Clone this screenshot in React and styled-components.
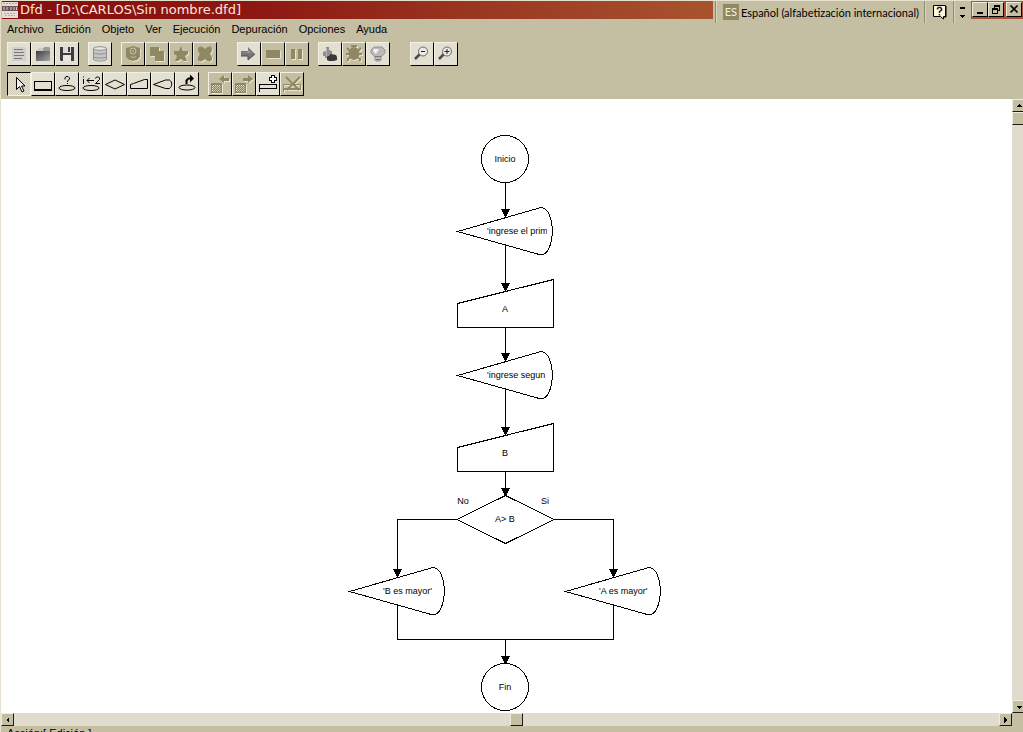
import React from 'react'
import styled, { createGlobalStyle, css } from 'styled-components'

const face = '#c4bea3'
const light = '#e3dfd1'
const shade = '#8f8863'
const track = '#dfdbcd'

const GlobalStyle = createGlobalStyle`
  * {
    box-sizing: border-box;
  }
  body {
    margin: 0;
    overflow: hidden;
    background: ${face};
    font-family: 'Liberation Sans', Arial, sans-serif;
    font-size: 11px;
    color: #000;
  }
  button {
    font: inherit;
    color: inherit;
    padding: 0;
  }
`

// The status bar is partly below the bottom of the screen
const Window = styled.div`
  display: flex;
  flex-direction: column;
  height: calc(100vh + 12px);
  border-left: 1px solid #e6e0cc;
  border-top: 1px solid #e6e0cc;
`

const TitleBar = styled.header`
  display: flex;
  align-items: flex-start;
  height: 19px;
  padding-left: 1px;
  background: ${face};
`

const Caption = styled.div`
  flex: 1;
  display: flex;
  align-items: center;
  gap: 2px;
  height: 18px;
  background: linear-gradient(90deg, #850f0f 0%, #8d1712 35%, #9b3a22 70%, #a8532f 100%);
  white-space: nowrap;
  overflow: hidden;
`

const Title = styled.h1`
  margin: 0;
  color: #ffe6dc;
  font: 13px/18px 'DejaVu Sans', Verdana, sans-serif;
`

const LanguageBar = styled.div`
  display: flex;
  align-items: center;
  height: 22px;
  padding-left: 2px;
  background: ${face};
  white-space: nowrap;
`

const Divider = styled.span`
  width: 2px;
  height: 22px;
  border-left: 1px solid #8f8a72;
  border-right: 1px solid #d9d4c0;
`

const Language = styled.button`
  display: flex;
  align-items: center;
  gap: 2px;
  padding: 0 5px 0 6px;
  border: 0;
  background: none;
  font: 11px Lato, 'Liberation Sans', sans-serif;
`

const LanguageCode = styled.span`
  width: 16px;
  line-height: 16px;
  text-align: center;
  color: #f4f1e0;
  background: ${shade};
`

const BarButton = styled.button`
  display: block;
  padding: 0 6px 0 ${(props) => (props.$narrow ? 5 : 7)}px;
  border: 0;
  background: none;
  line-height: 0;
`

const WindowButtons = styled.div`
  display: flex;
  height: 18px;
  padding: 1px;
  background: #a8532f;
`

const WindowButton = styled.button`
  width: 16px;
  height: 15px;
  margin-left: ${(props) => (props.$apart ? '2px' : '0')};
  border: 1px solid;
  border-color: #f0ecdc #000 #000 #f0ecdc;
  background: ${face};
  line-height: 0;
`

const MenuBar = styled.nav`
  display: flex;
  gap: 11px;
  padding: 2px 6px 6px;
`

const MenuItem = styled.button`
  border: 0;
  background: none;
  line-height: 14px;
`

const Toolbar = styled.div`
  display: flex;
  padding: 0 6px;
  margin-bottom: ${(props) => props.$bottom}px;
`

const ToolGroup = styled.div`
  display: flex;
  margin-right: ${(props) => props.$gap}px;
`

const ToolButton = styled.button`
  width: 24px;
  height: 24px;
  border: 1px solid;
  border-color: #f3f0e4 #000 #000 #f3f0e4;
  background: ${(props) => (props.disabled ? face : light)};
  color: #000;
  line-height: 0;

  ${(props) =>
    props.disabled &&
    css`
      color: ${shade};
      svg {
        filter: drop-shadow(1px 1px 0 #e9e5d3);
      }
    `}

  ${(props) =>
    props.$pressed &&
    css`
      border-color: #000 #f3f0e4 #f3f0e4 #000;
      background: repeating-conic-gradient(#cfcab6 0 25%, #e6e2d4 0 50%) 0 0 / 2px 2px;
    `}
`

const Workspace = styled.main`
  flex: 1;
  min-height: 0;
  display: grid;
  grid-template-columns: 1fr 11px;
  grid-template-rows: 1fr 13px;
`

const Canvas = styled.section`
  display: flex;
  justify-content: center;
  align-items: flex-start;
  padding-top: 36px;
  background: #fff;
  overflow: hidden;

  svg {
    flex: none;
  }
`

const Label = styled.text`
  font: 9px 'Liberation Sans', Arial, sans-serif;
  fill: #000;
  text-anchor: ${(props) => props.$anchor || 'middle'};
`

const ScrollBar = styled.div`
  display: flex;
  flex-direction: ${(props) => (props.$vertical ? 'column' : 'row')};
  background: ${track};
  overflow: hidden;
`

const scrollPart = css`
  flex: none;
  width: 13px;
  height: 13px;
  border: 1px solid;
  border-color: #f0ecdc #1c1a12 #1c1a12 #f0ecdc;
  background: ${face};
  line-height: 0;
`

const ScrollButton = styled.button`
  ${scrollPart}
`

const Thumb = styled.div`
  ${scrollPart}
`

const Space = styled.div`
  flex: ${(props) => props.$part} 0 0;
`

const StatusBar = styled.footer`
  flex: none;
  height: 18px;
  padding-left: 6px;
  line-height: 14px;
`

function Icon({ children }) {
  return (
    <svg width="22" height="22" viewBox="1 1 22 22" fill="none" stroke="none" aria-hidden="true">
      {children}
    </svg>
  )
}

const line = { stroke: 'currentColor', fill: 'none' }
const crisp = { ...line, shapeRendering: 'crispEdges' }

const icons = {
  new: (
    <>
      <path d="M5 5h12l2 2v12H5z" fill="#d0cfc9" />
      <path d="M7 7.5h9M7 10.5h10M7 13.5h10M7 16.5h8" stroke="#77777c" />
    </>
  ),
  open: (
    <>
      <defs>
        <linearGradient id="folder" x1="0" y1="0" x2="1" y2="1">
          <stop offset="0" stopColor="#3f3f42" />
          <stop offset="1" stopColor="#a5a5a8" />
        </linearGradient>
      </defs>
      <path d="M5 9l3-3h4v3z" fill="#c9c9c6" />
      <path d="M12 7l1-2h5l1 1v4h-7z" fill="#9b9b9b" />
      <path d="M5 9h14v10H5z" fill="url(#folder)" />
    </>
  ),
  save: (
    <>
      <path d="M5 5h14v14H6l-1-1z" fill="#3d3d40" />
      <path d="M8 5h8v6H8z" fill="#dcdbd8" />
      <path d="M13 5h2v5h-2z" fill="#3d3d40" />
      <path d="M8 13h8v6H8z" fill="#e9e8e4" />
    </>
  ),
  data: (
    <>
      <path d="M6 6h12v12H6z" fill="#c6c6c4" />
      <ellipse cx="12" cy="6.5" rx="6.5" ry="1.8" fill="#e8e8e6" stroke="#8e8e90" />
      <path d="M5.5 6.5v11c1 2 12 2 13 0v-11M5.5 10.5c1 2 12 2 13 0M5.5 14.5c1 2 12 2 13 0" stroke="#8e8e90" />
    </>
  ),
  cut: (
    <>
      <path d="M5 6l4-1 3-1 3 1 4 1v9l-3 3-4 1-4-1-3-3z" fill="currentColor" />
      <circle cx="12" cy="9" r="3" stroke="#c9c3a8" />
      <path d="M10 14c1 2 4 2 5 0" stroke="#c9c3a8" />
      <path d="M12 8v2" stroke="#c9c3a8" />
    </>
  ),
  copy: <path d="M5 5h9v4h5v10h-9v-5H5z" fill="currentColor" />,
  paste: <path d="M12 4l2 5h5v3l-3 2 2 5h-3l-3-2-3 2H6l2-5-3-2V9h5z" fill="currentColor" />,
  remove: (
    <path
      d="M6 5c2-1 4 0 6 2 2-2 4-3 6-2 2 2 1 4-1 7 2 3 3 5 1 7-2 1-4 0-6-2-2 2-4 3-6 2-2-2-1-4 1-7-2-3-3-5-1-7z"
      fill="currentColor"
    />
  ),
  run: (
    <>
      <path d="M4 9h7V5l7 7-7 6v-4H4z" fill="#77777b" />
      <path d="M5 10h6V8l3 3z" fill="#a3a3a6" />
      <path d="M18 12l-7 6v-4H4" stroke="#4c4c50" />
    </>
  ),
  stop: <path d="M5 8h14v8H5z" fill="currentColor" />,
  pause: <path d="M6 7h4v10H6zM13 7h4v10h-4z" fill="currentColor" />,
  step: (
    <>
      <path d="M8 5h3v3l3 1v4h-4v3H7v-2H5v-4l3-1z" fill="#8d8d93" />
      <path d="M8.5 6v8" stroke="#b4b4b8" />
      <path d="M10 14l3-2 5 1 1 2v3l-3 1h-5l-2-1v-3z" fill="#38383c" />
    </>
  ),
  bug: (
    <>
      <ellipse cx="12" cy="11.5" rx="5.5" ry="6.5" fill="currentColor" />
      <path d="M9 4h6M5 6l3 3M19 6l-3 3M4 12h16M6 19v-2l3-2M18 19v-2l-3-2" stroke="currentColor" strokeWidth="2" />
    </>
  ),
  bulb: (
    <>
      <path d="M8 5h8l3 3v3l-4 4v3l-1 1h-4l-1-1v-3l-4-4V8z" fill="#b9b9ba" stroke="#949497" />
      <path d="M8 7h5l-3 5-3-3z" fill="#f3f3f1" />
      <path d="M9 14.5h6M10 17.5h4" stroke="#77777a" />
    </>
  ),
  zoomOut: (
    <>
      <path d="M10 12l-5 5" stroke="#4a4a4d" strokeWidth="2.5" />
      <circle cx="13" cy="9.5" r="4.5" fill="#eceae4" stroke="#68686b" />
      <path d="M11 9.5h4" stroke="#222" />
    </>
  ),
  zoomIn: (
    <>
      <path d="M10 12l-5 5" stroke="#4a4a4d" strokeWidth="2.5" />
      <circle cx="13" cy="9.5" r="4.5" fill="#eceae4" stroke="#68686b" />
      <path d="M10.5 9.5h5M13 7v5" stroke="#222" />
    </>
  ),
  cursor: <path d="M9.5 5.5v12l3-3 2.5 5.5 2-1-2.5-5H18z" fill="#f4f2ea" stroke="#000" />,
  process: (
    <>
      <path d="M3.5 9.5h17v9h-17z" {...crisp} />
      <path d="M3 18h18" {...crisp} strokeWidth="2" />
    </>
  ),
  loop: (
    <>
      <path d="M10 7.5V6l1-1.5h2L14.5 6v1l-2 2v1M12.5 11v1" {...line} />
      <ellipse cx="12" cy="16" rx="8" ry="2.5" {...line} />
    </>
  ),
  assign: (
    <>
      <path
        d="M4.5 7v5M4.5 4.5v1M8 8.5h7M10.5 6L8 8.5l2.5 2.5M16.5 6.5l1-1.5h2l1 1v1.5l-4 4H21"
        {...line}
      />
      <ellipse cx="12" cy="16" rx="8" ry="2.5" {...line} />
    </>
  ),
  decision: <path d="M2.5 12.5L12 8l9.5 4.5L12 17z" {...line} />,
  input: <path d="M3.5 16.5v-4l3-1 11-4h3v9z" {...line} />,
  output: <path d="M2.5 12.5l12-4.500h4c3 2 3 6 0 8.5h-4z" {...line} />,
  call: (
    <>
      <ellipse cx="12" cy="15.5" rx="8" ry="2.5" {...line} />
      <path d="M11.5 12V8.5l2-2H17" {...line} strokeWidth="2" />
      <path d="M15 2.5l4 4-4 4z" fill="currentColor" />
    </>
  ),
  moveIn: (
    <>
      <path d="M3 11h11v2H3z" fill="currentColor" />
      <path d="M3.5 13v7.5h10V13" {...crisp} />
      <path d="M4 13.5h9M4 15.5h9M4 17.5h9M4 19.5h9" {...crisp} strokeDasharray="1 1" />
      <path d="M5 14.5h8M5 16.5h8M5 18.5h8" {...crisp} strokeDasharray="1 1" />
      <path d="M11 7l5-4v3h5v3h-5v2z" fill="currentColor" />
    </>
  ),
  moveOut: (
    <>
      <path d="M3 11h11v2H3z" fill="currentColor" />
      <path d="M3.5 13v7.5h10V13" {...crisp} />
      <path d="M4 13.5h9M4 15.5h9M4 17.5h9M4 19.5h9" {...crisp} strokeDasharray="1 1" />
      <path d="M5 14.5h8M5 16.5h8M5 18.5h8" {...crisp} strokeDasharray="1 1" />
      <path d="M21 7l-5-4v3h-5v3h5v2z" fill="currentColor" />
    </>
  ),
  addSub: (
    <>
      <path d="M15.5 3.5h3v2h2v3h-2v2h-3v-2h-2v-3h2z" {...crisp} fill="#fff" />
      <path d="M3.5 20v-7.5h17v4" {...crisp} />
      <path d="M3 16.5h18" {...crisp} />
    </>
  ),
  removeSub: (
    <>
      <path d="M3.5 20v-7.5h17v4h-17" {...line} />
      <path d="M3 17h18" {...line} strokeWidth="2" />
      <path d="M6 5l13 13M20 5L7 18" {...line} strokeWidth="2" />
    </>
  ),
}

const mainTools = [
  {
    gap: 9,
    items: [
      ['new', 'Nuevo'],
      ['open', 'Abrir'],
      ['save', 'Guardar'],
    ],
  },
  { gap: 9, items: [['data', 'Datos']] },
  {
    gap: 20,
    items: [
      ['cut', 'Cortar', true],
      ['copy', 'Copiar', true],
      ['paste', 'Pegar', true],
      ['remove', 'Eliminar', true],
    ],
  },
  {
    gap: 9,
    items: [
      ['run', 'Ejecutar'],
      ['stop', 'Detener', true],
      ['pause', 'Pausa', true],
    ],
  },
  {
    gap: 20,
    items: [
      ['step', 'Paso simple'],
      ['bug', 'Depurar', true],
      ['bulb', 'Evaluar'],
    ],
  },
  {
    gap: 9,
    items: [
      ['zoomOut', 'Reducir'],
      ['zoomIn', 'Aumentar'],
    ],
  },
]

const objectTools = [
  {
    gap: 9,
    items: [
      ['cursor', 'Cursor'],
      ['process', 'Proceso'],
      ['loop', 'Ciclo'],
      ['assign', 'Asignar'],
      ['decision', 'Decidir'],
      ['input', 'Lectura'],
      ['output', 'Salida'],
      ['call', 'Llamada'],
    ],
  },
  {
    gap: 9,
    items: [
      ['moveIn', 'Subprograma anterior', true],
      ['moveOut', 'Subprograma siguiente', true],
      ['addSub', 'Nuevo subprograma'],
      ['removeSub', 'Eliminar subprograma', true],
    ],
  },
]

const menus = ['Archivo', 'Edición', 'Objeto', 'Ver', 'Ejecución', 'Depuración', 'Opciones', 'Ayuda']

function Tools({ groups, active, bottom }) {
  return (
    <Toolbar role="toolbar" $bottom={bottom}>
      {groups.map((group) => (
        <ToolGroup key={group.items[0][0]} $gap={group.gap}>
          {group.items.map(([name, label, disabled]) => (
            <ToolButton key={name} aria-label={label} disabled={disabled} $pressed={name === active}>
              <Icon>{icons[name]}</Icon>
            </ToolButton>
          ))}
        </ToolGroup>
      ))}
    </Toolbar>
  )
}

function Arrow({ x, y }) {
  return <path d={`M${x - 4} ${y - 8}h9l-4 8h-1z`} fill="#000" stroke="none" />
}

// Cone shape of the output object, x and y are its tip
function Output({ x, y, label, clip, labelX }) {
  return (
    <g>
      <path d={`M${x}.5 ${y}.5L${x + 84} ${y - 24}.5C${x + 99} ${y - 23} ${x + 99} ${y + 23} ${x + 84} ${y + 24}z`} />
      <Label x={x + labelX} y={y + 3} $anchor="start" stroke="none" clipPath={clip ? 'url(#labels)' : undefined}>
        {label}
      </Label>
    </g>
  )
}

function Input({ x, y, label }) {
  return (
    <g>
      <path d={`M${x}.5 ${y + 24}.5L${x + 96}.5 ${y}.5v48h-96z`} />
      <Label x={x + 48} y={y + 33} stroke="none">
        {label}
      </Label>
    </g>
  )
}

function Terminal({ y, label }) {
  return (
    <g>
      <circle cx="505" cy={y} r="23.5" />
      <Label x="505" y={y + 3} stroke="none">
        {label}
      </Label>
    </g>
  )
}

function Diagram() {
  return (
    <svg
      width="317"
      height="577"
      viewBox="348 135 317 577"
      fill="none"
      stroke="#000"
      shapeRendering="crispEdges"
      role="img"
      aria-label="Diagrama de flujo"
    >
      <clipPath id="labels">
        <path d="M480 200h67v200h-67z" />
      </clipPath>
      <path d="M505.5 183v34M505.5 246v45M505.5 328v33M505.5 390v45M505.5 472v23" />
      <path d="M457.5 519.5h-60v58M553.5 519.5h60v58M397.5 605v34.5h216V605M505.5 639v24" />
      <Arrow x={505} y={217} />
      <Arrow x={505} y={291} />
      <Arrow x={505} y={361} />
      <Arrow x={505} y={435} />
      <Arrow x={505} y={496} />
      <Arrow x={397} y={577} />
      <Arrow x={613} y={577} />
      <Arrow x={505} y={664} />
      <Terminal y={159} label="Inicio" />
      <Output x={457} y={231} label="'ingrese el prim" labelX={30} clip />
      <Input x={457} y={279} label="A" />
      <Output x={457} y={375} label="'ingrese segun" labelX={30} clip />
      <Input x={457} y={423} label="B" />
      <path d="M457 519.5l48.5-24 48.5 24-48.5 24z" />
      <Label x="505" y="522" stroke="none">
        A&gt; B
      </Label>
      <Label x="463" y="504" stroke="none">
        No
      </Label>
      <Label x="545" y="504" stroke="none">
        Si
      </Label>
      <Output x={349} y={591} label="'B es mayor'" labelX={34} />
      <Output x={565} y={591} label="'A es mayor'" labelX={34} />
      <Terminal y={687} label="Fin" />
    </svg>
  )
}

function ScrollArrow({ d }) {
  return (
    <svg width="11" height="11" viewBox="0 0 11 11" shapeRendering="crispEdges" aria-hidden="true">
      <path d={d} />
    </svg>
  )
}

function App() {
  return (
    <>
      <GlobalStyle />
      <Window>
        <TitleBar>
          <Caption>
            <svg width="16" height="16" viewBox="0 0 16 16" aria-hidden="true">
              <path d="M0 0h16v16H0z" fill="#e6dcd8" />
              <path d="M0 4h16v5H0z" fill="#6f5557" />
              <path d="M2 5v3M5 5v3M9 5v3M12 5v3M14.5 5v3" stroke="#d9c8c6" />
              <path d="M1 1.5h14M2 11.5h12M3 13.5h10" stroke="#b9a3a3" strokeDasharray="2 1" />
            </svg>
            <Title>Dfd - [D:\CARLOS\Sin nombre.dfd]</Title>
          </Caption>
          <LanguageBar>
            <Divider />
            <Language>
              <LanguageCode>ES</LanguageCode>
              Español (alfabetización internacional)
            </Language>
            <Divider />
            <BarButton aria-label="Ayuda de idioma">
              <svg width="14" height="16" viewBox="0 0 14 16" aria-hidden="true">
                <path d="M.5 1.5h12v11h-2V15l-3-2.5h-7z" fill="#fffbd0" stroke="#000" />
                <path d="M13 2v11h-2" stroke="#000" fill="none" />
                <path d="M4.5 5.5v-1l1-1h2l1 1V6l-2 1.5V9M6.5 10v1.5" stroke="#15154f" strokeWidth="1.5" fill="none" />
              </svg>
            </BarButton>
            <Divider />
            <BarButton aria-label="Opciones de idioma" $narrow>
              <svg width="5" height="16" viewBox="0 0 5 16" shapeRendering="crispEdges" aria-hidden="true">
                <path d="M0 3h5v2H0zM0 11h5L3 14H2z" />
              </svg>
            </BarButton>
          </LanguageBar>
          <WindowButtons>
            <WindowButton aria-label="Minimizar">
              <svg width="14" height="13" shapeRendering="crispEdges" aria-hidden="true">
                <path d="M4 9h6v2H4z" />
              </svg>
            </WindowButton>
            <WindowButton aria-label="Restaurar">
              <svg width="14" height="13" fill="none" stroke="#000" shapeRendering="crispEdges" aria-hidden="true">
                <path d="M5.5 6V2.5h5v5H9M5 3.5h6M3.5 5.5h5v5h-5zM3 6.5h6" />
              </svg>
            </WindowButton>
            <WindowButton aria-label="Cerrar" $apart>
              <svg width="14" height="13" fill="none" stroke="#000" strokeWidth="1.7" aria-hidden="true">
                <path d="M3.5 2.5l7 7M10.5 2.5l-7 7" />
              </svg>
            </WindowButton>
          </WindowButtons>
        </TitleBar>
        <MenuBar>
          {menus.map((menu) => (
            <MenuItem key={menu}>{menu}</MenuItem>
          ))}
        </MenuBar>
        <Tools groups={mainTools} bottom={6} />
        <Tools groups={objectTools} active="cursor" bottom={3} />
        <Workspace>
          <Canvas>
            <Diagram />
          </Canvas>
          <ScrollBar $vertical>
            <ScrollButton aria-label="Subir">
              <ScrollArrow d="M3 7h6L6 4z" />
            </ScrollButton>
            <Thumb />
            <Space $part={1} />
            <ScrollButton aria-label="Bajar">
              <ScrollArrow d="M3 5h6L6 8z" />
            </ScrollButton>
          </ScrollBar>
          <ScrollBar>
            <ScrollButton aria-label="Izquierda">
              <ScrollArrow d="M7 3v6L4 6z" />
            </ScrollButton>
            <Space $part={51} />
            <Thumb />
            <Space $part={49} />
            <ScrollButton aria-label="Derecha">
              <ScrollArrow d="M4 3v6l3-3z" />
            </ScrollButton>
          </ScrollBar>
        </Workspace>
        <StatusBar>Acción:[ Edición ]</StatusBar>
      </Window>
    </>
  )
}

export default App
